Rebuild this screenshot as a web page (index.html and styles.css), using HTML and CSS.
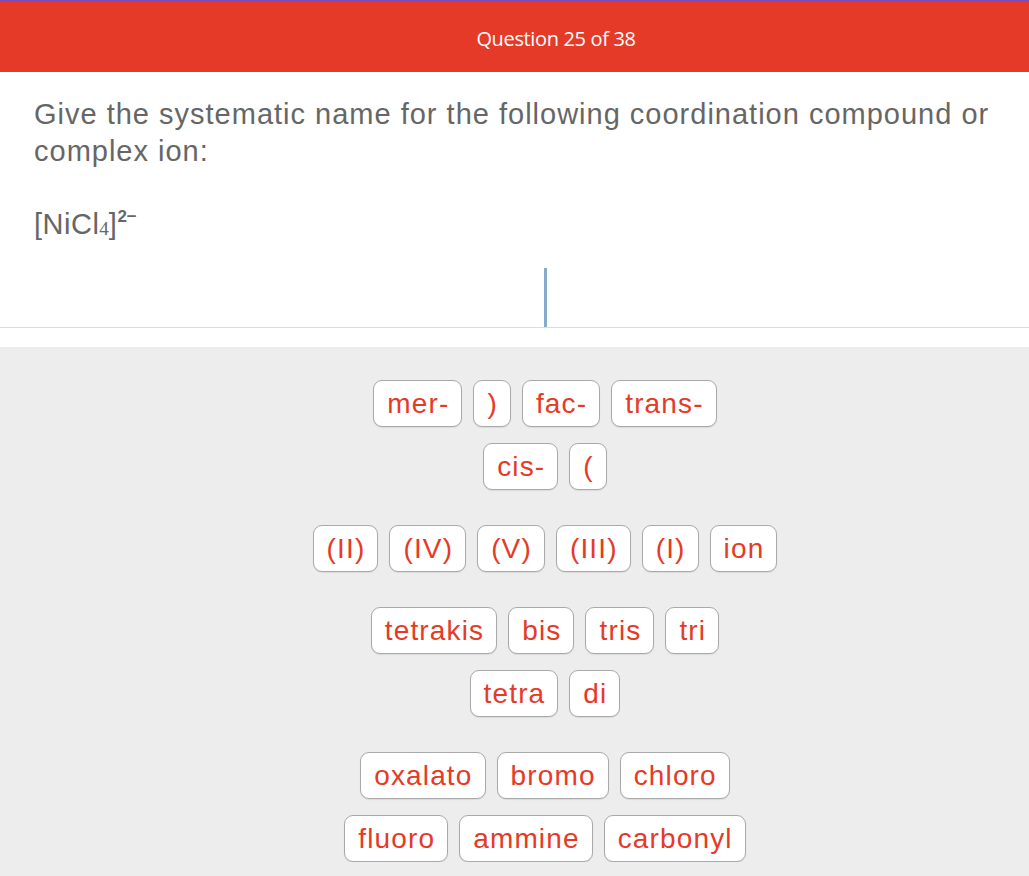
FILE: index.html
```html
<!DOCTYPE html>
<html>
<head>
<meta charset="utf-8">
<link rel="stylesheet" href="styles.css">
</head>
<body>
<div class="topline"></div>
<header class="header"><span class="title">Question 25 of 38</span></header>
<section class="question">
  <p class="prompt">Give the systematic name for the following coordination compound or complex ion:</p>
  <p class="formula">[NiCl<span class="sub">4</span>]<span class="sup">2−</span></p>
</section>
<section class="answer">
  <div class="cursor"></div>
</section>
<div class="divider"></div>
<div class="spacer"></div>
<section class="bank">
  <div class="group">
    <div class="row"><span class="tile">mer-</span><span class="tile">)</span><span class="tile">fac-</span><span class="tile">trans-</span></div>
    <div class="row"><span class="tile">cis-</span><span class="tile">(</span></div>
  </div>
  <div class="group">
    <div class="row"><span class="tile">(II)</span><span class="tile">(IV)</span><span class="tile">(V)</span><span class="tile">(III)</span><span class="tile">(I)</span><span class="tile">ion</span></div>
  </div>
  <div class="group">
    <div class="row"><span class="tile">tetrakis</span><span class="tile">bis</span><span class="tile">tris</span><span class="tile">tri</span></div>
    <div class="row"><span class="tile">tetra</span><span class="tile">di</span></div>
  </div>
  <div class="group">
    <div class="row"><span class="tile">oxalato</span><span class="tile">bromo</span><span class="tile">chloro</span></div>
    <div class="row"><span class="tile">fluoro</span><span class="tile">ammine</span><span class="tile">carbonyl</span></div>
  </div>
</section>
</body>
</html>
```
FILE: styles.css
```css
html, body {
  margin: 0;
  padding: 0;
  background: #ededed;
  overflow: hidden;
}
body {
  font-family: "Liberation Sans", Arial, sans-serif;
}
.topline {
  height: 2px;
  background: #7b4cbf;
}
.header {
  height: 70px;
  box-sizing: border-box;
  background: #e53a27;
  display: flex;
  align-items: center;
  justify-content: center;
  padding: 3px 0 0 83px;
}
.title {
  color: #ffffff;
  font-family: "Open Sans", sans-serif;
  font-size: 20px;
  letter-spacing: -0.35px;
}
.question {
  background: #ffffff;
  padding: 24px 34px 0 34px;
}
.prompt {
  margin: 0;
  color: #666666;
  font-size: 29px;
  line-height: 37px;
  letter-spacing: 1px;
}
.formula {
  margin: 36px 0 0 0;
  color: #666666;
  font-size: 29px;
  line-height: 37px;
  letter-spacing: 0.5px;
}
.sub {
  font-family: "Liberation Serif", "Times New Roman", serif;
  font-size: 19px;
  letter-spacing: 0;
  vertical-align: -1px;
}
.sup {
  font-size: 17px;
  font-weight: bold;
  vertical-align: 12px;
  line-height: 0;
  letter-spacing: 0;
}
.answer {
  background: #ffffff;
  padding-top: 21px;
  display: flex;
  justify-content: center;
  padding-left: 61px;
}
.cursor {
  width: 3px;
  height: 59px;
  background: #86abcb;
}
.divider {
  height: 1px;
  background: #dcdcdc;
}
.spacer {
  height: 19px;
  background: #ffffff;
}
.bank {
  padding: 33px 0 0 61px;
  display: flex;
  flex-direction: column;
  gap: 35px;
}
.group {
  display: flex;
  flex-direction: column;
  gap: 16px;
}
.row {
  display: flex;
  justify-content: center;
  gap: 11px;
}
.tile {
  background: #ffffff;
  border: 1px solid #a9a9a9;
  border-radius: 9px;
  color: #e53a27;
  font-size: 28px;
  line-height: 35px;
  letter-spacing: 1.15px;
  padding: 5px 12px 5px 13px;
  box-shadow: 0 1px 1px rgba(0,0,0,0.08);
}
```
